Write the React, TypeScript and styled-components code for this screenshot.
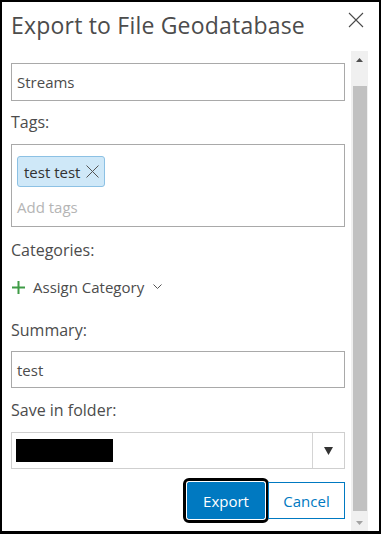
import React from "react";
import styled, { createGlobalStyle } from "styled-components";

const Global = createGlobalStyle`
    html, body {
        margin: 0;
        padding: 0;
        background: #fff;
    }
    body {
        font-family: "Open Sans", "Liberation Sans", sans-serif;
        color: #4c4c4c;
    }
    * {
        box-sizing: border-box;
    }
`;

const Frame = styled.div`
    width: 381px;
    height: 534px;
    border: 2px solid #000;
    border-bottom-width: 3px;
    background: #fff;
    display: flex;
    flex-direction: column;
    overflow: hidden;
`;

const Header = styled.div`
    height: 49px;
    flex: none;
    display: flex;
    justify-content: space-between;
    align-items: flex-start;
    padding: 8px 15px 0 9px;
`;

const Title = styled.h1`
    margin: 0;
    font-size: 23px;
    line-height: 30px;
    font-weight: 400;
    letter-spacing: 0.2px;
    color: #4c4c4c;
`;

const CloseButton = styled.button`
    border: 0;
    background: none;
    padding: 0;
    margin-top: 2px;
    width: 16px;
    height: 16px;
    display: flex;
    cursor: pointer;
`;

const Body = styled.div`
    flex: 1;
    min-height: 0;
    display: flex;
    gap: 6px;
    padding: 0 11px 0 9px;
`;

const Content = styled.div`
    width: 334px;
    display: flex;
    flex-direction: column;
`;

const Label = styled.div<{ $top: number }>`
    margin-top: ${(p) => p.$top}px;
    font-size: 16px;
    line-height: 20px;
    color: #4c4c4c;
`;

const TextInput = styled.div<{ $top: number; $h: number }>`
    margin-top: ${(p) => p.$top}px;
    height: ${(p) => p.$h}px;
    border: 1px solid #a9a9a9;
    display: flex;
    align-items: center;
    padding: 0 5px;
    font-size: 15px;
    color: #4c4c4c;
`;

const TagBox = styled.div`
    margin-top: 12px;
    height: 83px;
    border: 1px solid #a9a9a9;
    padding: 11px 5px 0;
    display: flex;
    flex-direction: column;
    align-items: flex-start;
`;

const Chip = styled.div`
    height: 31px;
    display: flex;
    align-items: center;
    gap: 6px;
    padding: 0 5px 0 6px;
    background: #cfe8f8;
    border: 1px solid #8cc1e4;
    border-radius: 3px;
    font-size: 15px;
    color: #323232;
`;

const Placeholder = styled.div`
    margin-top: 10px;
    font-size: 15px;
    line-height: 20px;
    color: #b5b5b5;
`;

const AssignRow = styled.div`
    margin-top: 17px;
    height: 20px;
    display: flex;
    align-items: center;
    font-size: 15px;
    color: #4c4c4c;
    cursor: pointer;
`;

const PlusIcon = styled.svg`
    margin: 0 8px 0 1px;
`;

const Chevron = styled.svg`
    margin-left: 9px;
`;

const Select = styled.div`
    margin-top: 12px;
    height: 37px;
    border: 1px solid #cfcfcf;
    display: flex;
`;

const SelectValue = styled.div`
    flex: 1;
    display: flex;
    align-items: center;
    padding-left: 4px;
`;

const Redacted = styled.div`
    width: 97px;
    height: 23px;
    background: #000;
`;

const SelectArrow = styled.div`
    width: 32px;
    border-left: 1px solid #d4d4d4;
    display: flex;
    align-items: center;
    justify-content: center;
`;

const Actions = styled.div`
    margin-top: 13px;
    display: flex;
    justify-content: flex-end;
    gap: 3px;
`;

const Button = styled.button<{ $primary?: boolean }>`
    height: 37px;
    width: ${(p) => (p.$primary ? 78 : 77)}px;
    font-family: "Open Sans", "Liberation Sans", sans-serif;
    font-size: 15px;
    border: 1px solid #0079c1;
    background: ${(p) => (p.$primary ? "#0079c1" : "#fff")};
    color: ${(p) => (p.$primary ? "#fff" : "#0079c1")};
    outline: ${(p) => (p.$primary ? "3px solid #000" : "none")};
    outline-offset: 1px;
    border-radius: ${(p) => (p.$primary ? 2 : 0)}px;
    cursor: pointer;
    padding: 0;
`;

const Scrollbar = styled.div`
    width: 17px;
    background: #f0f0f0;
    display: flex;
    flex-direction: column;
    align-items: center;
`;

const ScrollArrow = styled.div`
    height: 17px;
    flex: none;
    display: flex;
    align-items: center;
    justify-content: center;
`;

const Thumb = styled.div`
    flex: 1;
    width: 14px;
    margin: 18px 0 3px;
    background: #c1c1c1;
`;

const App = () => {
    return (
        <>
            <Global />
            <Frame>
                <Header>
                    <Title>Export to File Geodatabase</Title>
                    <CloseButton aria-label="Close">
                        <svg width="16" height="16" viewBox="0 0 16 16">
                            <path d="M1 1 L15 15 M15 1 L1 15" stroke="#4a4a4a" strokeWidth="1.1" fill="none" />
                        </svg>
                    </CloseButton>
                </Header>
                <Body>
                    <Content>
                        <TextInput $top={12} $h={38}>Streams</TextInput>
                        <Label $top={11}>Tags:</Label>
                        <TagBox>
                            <Chip>
                                test test
                                <svg width="13" height="13" viewBox="0 0 13 13">
                                    <path d="M0.5 0.5 L12.5 12.5 M12.5 0.5 L0.5 12.5" stroke="#555" strokeWidth="1" fill="none" />
                                </svg>
                            </Chip>
                            <Placeholder>Add tags</Placeholder>
                        </TagBox>
                        <Label $top={13}>Categories:</Label>
                        <AssignRow>
                            <PlusIcon width="13" height="13" viewBox="0 0 13 13">
                                <path d="M6.5 0 V13 M0 6.5 H13" stroke="#3f9b46" strokeWidth="2" fill="none" />
                            </PlusIcon>
                            Assign Category
                            <Chevron width="9" height="6" viewBox="0 0 9 6">
                                <path d="M0.5 0.5 L4.5 4.5 L8.5 0.5" stroke="#555" strokeWidth="1" fill="none" />
                            </Chevron>
                        </AssignRow>
                        <Label $top={23}>Summary:</Label>
                        <TextInput $top={11} $h={37}>test</TextInput>
                        <Label $top={12}>Save in folder:</Label>
                        <Select>
                            <SelectValue>
                                <Redacted />
                            </SelectValue>
                            <SelectArrow>
                                <svg width="9" height="8" viewBox="0 0 9 8">
                                    <path d="M0 0 H9 L4.5 8 Z" fill="#333" />
                                </svg>
                            </SelectArrow>
                        </Select>
                        <Actions>
                            <Button $primary>Export</Button>
                            <Button>Cancel</Button>
                        </Actions>
                    </Content>
                    <Scrollbar>
                        <ScrollArrow>
                            <svg width="7" height="4" viewBox="0 0 7 4">
                                <path d="M0 4 L3.5 0 L7 4 Z" fill="#505050" />
                            </svg>
                        </ScrollArrow>
                        <Thumb />
                        <ScrollArrow>
                            <svg width="7" height="4" viewBox="0 0 7 4">
                                <path d="M0 0 L3.5 4 L7 0 Z" fill="#a3a3a3" />
                            </svg>
                        </ScrollArrow>
                    </Scrollbar>
                </Body>
            </Frame>
        </>
    );
};

export default App;
